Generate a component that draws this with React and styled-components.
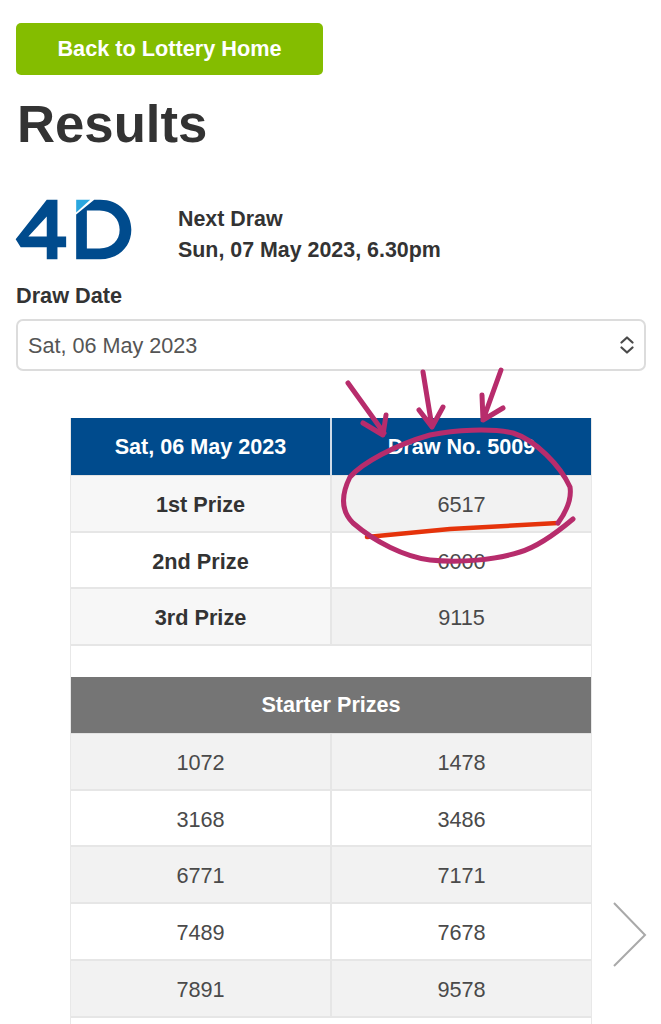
import styled, { createGlobalStyle } from 'styled-components';

const GlobalStyle = createGlobalStyle`
  html, body {
    margin: 0;
    padding: 0;
    background: #fff;
  }
  body {
    font-family: 'Liberation Sans', Arial, sans-serif;
    color: #333;
    overflow: hidden;
  }
`;

const Page = styled.div`
  position: relative;
  width: 661px;
  height: 1024px;
  overflow: hidden;
  padding: 23px 15px 0 15px;
  box-sizing: border-box;
`;

const BackButton = styled.button`
  display: block;
  width: 307px;
  height: 52px;
  margin-left: 1px;
  border: none;
  border-radius: 5px;
  background: #84bd00;
  color: #fff;
  font-family: inherit;
  font-size: 21.7px;
  font-weight: 700;
`;

const Title = styled.h1`
  margin: 14px 0 0 2px;
  font-size: 52.7px;
  line-height: 70px;
  font-weight: 700;
  color: #333;
`;

const DrawInfo = styled.div`
  display: flex;
  align-items: center;
  gap: 46px;
  margin-top: 39px;
  height: 63px;
`;

const NextDraw = styled.div`
  font-size: 21.4px;
  font-weight: 700;
  line-height: 31px;
  color: #333;
  padding-top: 10px;
`;

const FieldLabel = styled.label`
  display: block;
  margin: 22px 0 0 1px;
  font-size: 21.7px;
  line-height: 26px;
  font-weight: 700;
  color: #333;
`;

const SelectWrap = styled.div`
  position: relative;
  margin: 10px 0 0 1px;
  height: 52px;
`;

const DateSelect = styled.select`
  appearance: none;
  width: 100%;
  height: 100%;
  box-sizing: border-box;
  padding: 0 10px;
  border: 2px solid #dcdcdc;
  border-radius: 7px;
  background: #fff;
  color: #555;
  font-family: inherit;
  font-size: 21.6px;
`;

const SelectCaret = styled.svg`
  position: absolute;
  right: 12px;
  top: 17px;
  pointer-events: none;
`;

const ResultsTable = styled.table`
  width: 522px;
  margin: 47px 0 0 55px;
  border-collapse: separate;
  border-spacing: 0;
  table-layout: fixed;
  font-size: 21.7px;
  color: #4a4a4a;
  border-right: 1px solid #e8e8e8;
  border-left: 1px solid #e8e8e8;
`;

const HeadCell = styled.th`
  height: ${props => props.$grey ? '56px' : '57px'};
  padding: 0;
  background: ${props => props.$grey ? '#757575' : '#004b8d'};
  border-left: ${props => props.$divided ? '2px solid #cfdbe8' : 'none'};
  border-bottom: 1px solid #e2e2e2;
  color: #fff;
  font-size: 21.6px;
  font-weight: 700;
  text-align: center;
`;

const Cell = styled.td`
  height: 56.7px;
  box-sizing: border-box;
  padding: 3px 0 0;
  background: ${props => props.$bg};
  border-left: ${props => props.$divided ? '2px solid #e6e6e6' : 'none'};
  border-bottom: 2px solid #e6e6e6;
  text-align: center;
  font-weight: ${props => props.$strong ? 700 : 400};
  color: ${props => props.$strong ? '#333' : '#4a4a4a'};
`;

const SpacerCell = styled.td`
  height: 31px;
  padding: 0;
  background: #fff;
`;

const Annotations = styled.svg`
  position: absolute;
  left: 0;
  top: 0;
  pointer-events: none;
`;

const NextArrow = styled.svg`
  position: absolute;
  left: 612px;
  top: 902px;
`;

const prizes = [
  ['1st Prize', '6517', '#f7f7f7', '#f2f2f2'],
  ['2nd Prize', '6000', '#fff', '#fff'],
  ['3rd Prize', '9115', '#f7f7f7', '#f2f2f2'],
];

const starters = [
  ['1072', '1478'],
  ['3168', '3486'],
  ['6771', '7171'],
  ['7489', '7678'],
  ['7891', '9578'],
];

function Logo() {
  return (
    <svg width="117" height="63" viewBox="45 85 350 188">
      <path
        fill="#004b8d"
        fillRule="evenodd"
        d="M140 90H172V200H198V232H172V268H140V232H62L47 208ZM140 140L85 200H140Z"
      />
      <path fill="#2aa7df" d="M228 90H270L228 128Z" />
      <path
        fill="#004b8d"
        fillRule="evenodd"
        d="M228 134L282 90H300C355 90 393 130 393 180C393 230 355 268 300 268H228ZM260 122V236H298C335 236 358 212 358 180C358 148 335 122 298 122Z"
      />
    </svg>
  );
}

function Scribbles() {
  return (
    <Annotations width="661" height="1024" viewBox="0 0 661 1024" fill="none" strokeLinecap="round" strokeLinejoin="round">
      <path d="M367 537L450 529L558 523" stroke="#e5330b" strokeWidth="4.5" />
      <g stroke="#b72c6c" strokeWidth="5">
        <path d="M348 383L384 433M386 415L383 435L363 423" />
        <path d="M423 372L432 427M419 410L432 427L443 407" />
        <path d="M501 370L483 420M482 395L483 420L503 408" />
        <path d="M573 519C560 530 540 546 520 552C495 560 460 563 430 560C405 557 375 542 353 523C342 512 340 497 350 477C362 463 395 445 430 435C455 430 490 428 513 433C535 440 560 465 570 487C572 500 566 512 558 523" />
      </g>
    </Annotations>
  );
}

function App() {
  return (
    <Page>
      <GlobalStyle />
      <BackButton>Back to Lottery Home</BackButton>
      <Title>Results</Title>
      <DrawInfo>
        <Logo />
        <NextDraw>
          Next Draw<br />
          Sun, 07 May 2023, 6.30pm
        </NextDraw>
      </DrawInfo>
      <FieldLabel htmlFor="drawDate">Draw Date</FieldLabel>
      <SelectWrap>
        <DateSelect id="drawDate" defaultValue="Sat, 06 May 2023">
          <option>Sat, 06 May 2023</option>
        </DateSelect>
        <SelectCaret width="14" height="18" viewBox="0 0 14 18" fill="none" stroke="#4a4a4a" strokeWidth="2.2" strokeLinecap="round" strokeLinejoin="round">
          <path d="M1.5 6.5L7 1.5L12.5 6.5M1.5 11.5L7 16.5L12.5 11.5" />
        </SelectCaret>
      </SelectWrap>
      <ResultsTable>
        <colgroup>
          <col width="259" />
          <col />
        </colgroup>
        <thead>
          <tr>
            <HeadCell>Sat, 06 May 2023</HeadCell>
            <HeadCell $divided>Draw No. 5009</HeadCell>
          </tr>
        </thead>
        <tbody>
          {prizes.map(([name, number, left, right]) => (
            <tr key={name}>
              <Cell $strong $bg={left}>{name}</Cell>
              <Cell $divided $bg={right}>{number}</Cell>
            </tr>
          ))}
          <tr>
            <SpacerCell colSpan="2" />
          </tr>
          <tr>
            <HeadCell colSpan="2" $grey>Starter Prizes</HeadCell>
          </tr>
          {starters.map(([a, b], i) => (
            <tr key={a}>
              <Cell $bg={i % 2 ? '#fff' : '#f2f2f2'}>{a}</Cell>
              <Cell $divided $bg={i % 2 ? '#fff' : '#f2f2f2'}>{b}</Cell>
            </tr>
          ))}
          <tr>
            <Cell colSpan="2" $bg="#fff" />
          </tr>
        </tbody>
      </ResultsTable>
      <NextArrow width="36" height="66" viewBox="0 0 36 66" fill="none" stroke="#a9a9a9" strokeWidth="2">
        <path d="M2 1L33 33L2 64" />
      </NextArrow>
      <Scribbles />
    </Page>
  );
}

export default App;
